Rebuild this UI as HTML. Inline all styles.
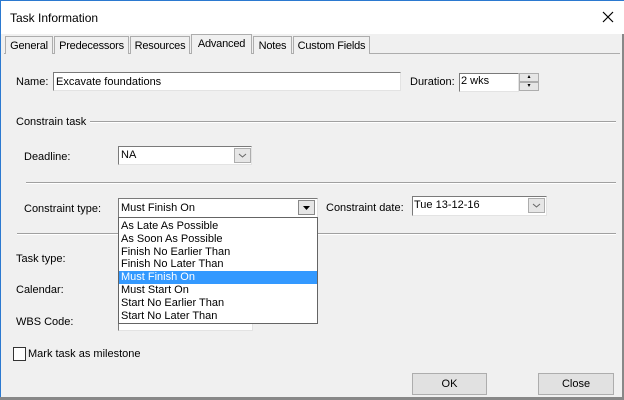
<!DOCTYPE html>
<html><head><style>
*{margin:0;padding:0;box-sizing:border-box}
body{width:624px;height:400px;background:#f0f0f0;font-family:"Liberation Sans",sans-serif;font-size:11px;color:#000;position:relative;overflow:hidden}
.a{position:absolute;white-space:nowrap}
.inp{position:absolute;background:#fff;border:1px solid #7a7a7a;border-right-color:#e3e3e3;border-bottom-color:#e3e3e3;padding:1px 2px;line-height:14px;white-space:nowrap}
.line{position:absolute;height:2px;border-top:1px solid #a0a0a0;border-bottom:1px solid #fff}
.tab{position:absolute;top:36px;height:18px;border:1px solid #adadad;border-bottom:none;background:#f0f0f0;padding:2px 0 0 0;text-align:center;line-height:14px;white-space:nowrap;letter-spacing:-0.2px;overflow:hidden}
.ddb{position:absolute;width:17px;height:15px;background:#e6e6e6;border:1px solid #adadad}
.btn{position:absolute;height:22px;background:#e1e1e1;border:1px solid #adadad;text-align:center;line-height:20px}
</style></head><body>
<div class="a" style="left:0;top:0;width:624px;height:34px;background:#fff;border-left:1px solid #2b79d0;border-top:1px solid #2b79d0"></div>
<div class="a" style="left:10px;top:11px;font-size:12px">Task Information</div>
<svg class="a" style="left:601px;top:10px" width="14" height="14"><path d="M2 2L12 12M12 2L2 12" stroke="#000" stroke-width="1.2"/></svg>
<div class="a" style="left:0;top:34px;width:1px;height:366px;background:#2b79d0"></div>
<div class="a" style="left:622px;top:34px;width:2px;height:366px;background:#888"></div>
<div class="a" style="left:0;top:397px;width:624px;height:3px;background:#888"></div>
<div class="a" style="left:4px;top:53px;width:616px;height:1px;background:#adadad"></div>
<div class="tab" style="left:5px;width:48px">General</div>
<div class="tab" style="left:54px;width:75px">Predecessors</div>
<div class="tab" style="left:130px;width:60px">Resources</div>
<div class="tab" style="left:191px;top:34px;height:20px;width:61px">Advanced</div>
<div class="tab" style="left:253px;width:39px">Notes</div>
<div class="tab" style="left:293px;width:77px">Custom Fields</div>

<div class="a" style="left:16px;top:76px">Name:</div>
<div class="inp" style="left:53px;top:72px;width:348px;height:19px;padding-top:2px">Excavate foundations</div>
<div class="a" style="left:410px;top:76px">Duration:</div>
<div class="inp" style="left:459px;top:73px;width:60px;height:19px;padding:0 1px">2 wks</div>
<div class="a" style="left:519px;top:73px;width:20px;height:9px;background:#e6e6e6;border:1px solid #adadad;font-size:6px;text-align:center;line-height:6px">▴</div>
<div class="a" style="left:519px;top:82px;width:20px;height:9px;background:#e6e6e6;border:1px solid #adadad;font-size:6px;text-align:center;line-height:6px">▾</div>

<div class="a" style="left:16px;top:116px">Constrain task</div>
<div class="line" style="left:90px;top:121px;width:526px"></div>
<div class="a" style="left:24px;top:151px">Deadline:</div>
<div class="inp" style="left:118px;top:146px;width:134px;height:19px;padding:1px 2px">NA</div>
<div class="ddb" style="left:234px;top:148px"><svg width="15" height="13"><path d="M4 5L7.5 8L11 5" stroke="#666" fill="none"/></svg></div>
<div class="line" style="left:26px;top:182px;width:590px"></div>

<div class="a" style="left:24px;top:203px">Constraint type:</div>
<div class="inp" style="left:118px;top:198px;width:200px;height:20px;padding:2px 2px">Must Finish On</div>
<div class="ddb" style="left:298px;top:200px;border-color:#888"><svg width="15" height="13"><path d="M4 5L11 5L7.5 9Z" fill="#000"/></svg></div>
<div class="a" style="left:326px;top:202px">Constraint date:</div>
<div class="inp" style="left:412px;top:196px;width:135px;height:20px;padding:1px 1px">Tue 13-12-16</div>
<div class="ddb" style="left:528px;top:198px"><svg width="15" height="13"><path d="M4 5L7.5 8L11 5" stroke="#666" fill="none"/></svg></div>
<div class="line" style="left:17px;top:233px;width:599px"></div>

<div class="a" style="left:16px;top:253px">Task type:</div>
<div class="a" style="left:16px;top:284px">Calendar:</div>
<div class="a" style="left:16px;top:316px">WBS Code:</div>
<div class="inp" style="left:118px;top:312px;width:135px;height:19px"></div>

<div class="a" style="left:118px;top:217px;width:200px;height:107px;background:#fff;border:1px solid #646464;line-height:12.8px;padding-top:2px">
<div style="padding-left:2px">As Late As Possible</div>
<div style="padding-left:2px">As Soon As Possible</div>
<div style="padding-left:2px">Finish No Earlier Than</div>
<div style="padding-left:2px">Finish No Later Than</div>
<div style="padding-left:2px;background:#3399ff;color:#fff">Must Finish On</div>
<div style="padding-left:2px">Must Start On</div>
<div style="padding-left:2px">Start No Earlier Than</div>
<div style="padding-left:2px">Start No Later Than</div>
</div>

<div class="a" style="left:13px;top:347px;width:13px;height:14px;background:#fff;border:1px solid #333"></div>
<div class="a" style="left:28px;top:348px">Mark task as milestone</div>
<div class="btn" style="left:412px;top:373px;width:75px">OK</div>
<div class="btn" style="left:538px;top:373px;width:76px">Close</div>
</body></html>
